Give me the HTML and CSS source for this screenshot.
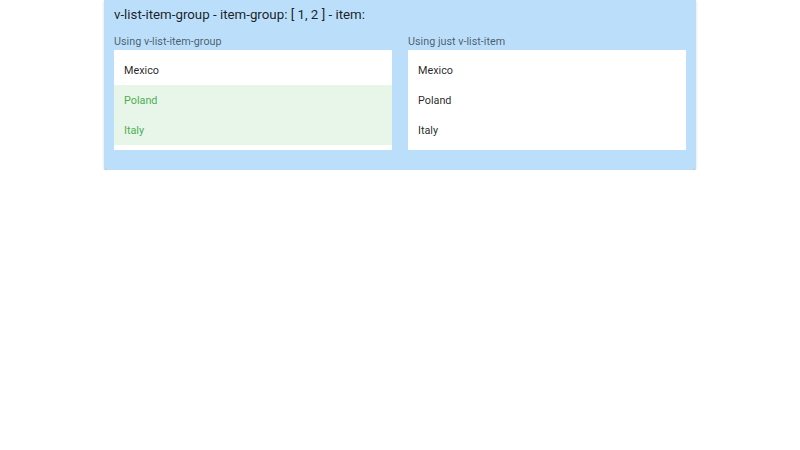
FILE: index.html
```html
<!DOCTYPE html>
<html>
<head>
<meta charset="utf-8">
<link rel="stylesheet" href="styles.css">
</head>
<body>
<div class="page">
  <div class="card">
    <div class="title">v-list-item-group - item-group: [ 1, 2 ] - item:</div>
    <div class="cols">
      <div class="col">
        <div class="label">Using v-list-item-group</div>
        <div class="list">
          <div class="item">Mexico</div>
          <div class="item active">Poland</div>
          <div class="item active">Italy</div>
        </div>
      </div>
      <div class="col">
        <div class="label">Using just v-list-item</div>
        <div class="list">
          <div class="item">Mexico</div>
          <div class="item">Poland</div>
          <div class="item">Italy</div>
        </div>
      </div>
    </div>
  </div>
</div>
</body>
</html>
```
FILE: styles.css
```css
html, body {
  margin: 0;
  padding: 0;
  background: #ffffff;
  font-family: Roboto, "Liberation Sans", sans-serif;
}
.page {
  width: 592px;
  margin: 0 auto;
}
.card {
  background: #bbdefb;
  border-radius: 0 0 4px 4px;
  box-shadow: 0 2px 1px -1px rgba(0,0,0,0.2), 0 1px 1px 0 rgba(0,0,0,0.14), 0 1px 3px 0 rgba(0,0,0,0.12);
  padding: 6px 10px 20px;
}
.title {
  font-size: 13.3px;
  font-weight: 400;
  line-height: 18px;
  color: rgba(0,0,0,0.87);
}
.cols {
  display: grid;
  grid-template-columns: 1fr 1fr;
  gap: 16px;
  margin-top: 10px;
}
.label {
  font-size: 10.8px;
  line-height: 16px;
  color: rgba(0,0,0,0.6);
}
.list {
  background: #ffffff;
  padding: 5px 0;
}
.item {
  height: 30px;
  line-height: 31px;
  padding: 0 10px;
  font-size: 10.8px;
  color: rgba(0,0,0,0.87);
}
.item.active {
  background: #e8f5e9;
  color: #4caf50;
}
```
